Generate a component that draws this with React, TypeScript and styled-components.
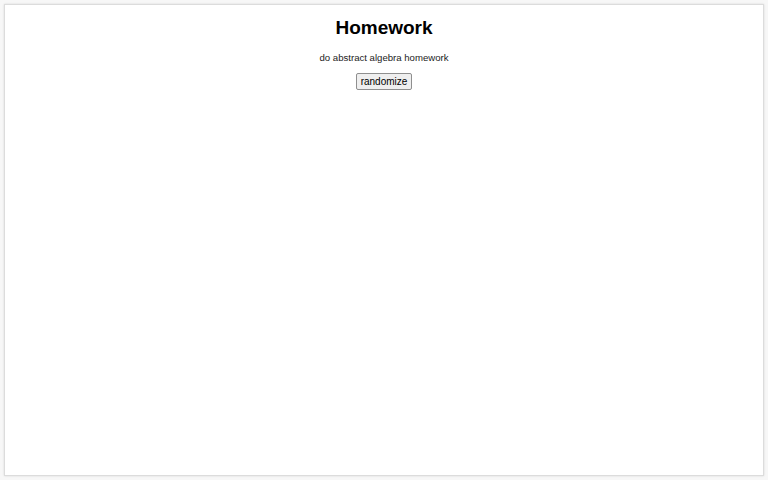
import styled, { createGlobalStyle } from 'styled-components';

const GlobalStyle = createGlobalStyle`
	html, body {
		margin: 0;
		padding: 0;
		background: #f7f7f7;
	}
	body {
		font-family: 'Liberation Sans', Arial, sans-serif;
	}
`;

const Page = styled.div`
	box-sizing: border-box;
	width: 768px;
	height: 480px;
	padding: 4px;
`;

const Card = styled.main`
	box-sizing: border-box;
	height: 472px;
	background: #ffffff;
	border: 1px solid #dcdcdc;
	box-shadow: 0 0 2px rgba(0, 0, 0, 0.12);
	display: flex;
	flex-direction: column;
	align-items: center;
	padding-top: 12px;
`;

const Title = styled.h1`
	margin: 0;
	font-size: 19px;
	font-weight: bold;
	color: #000;
	line-height: 22px;
`;

const Task = styled.p`
	margin: 13px 0 0;
	font-size: 9.6px;
	line-height: 12px;
	color: #222;
`;

const Button = styled.button`
	margin-top: 9px;
	font-family: 'Liberation Sans', Arial, sans-serif;
	font-size: 10px;
	line-height: 11px;
	padding: 2px 4px;
	color: #000;
	background: #efefef;
	border: 1px solid #8f8f8f;
	border-radius: 2px;
`;

export default function App() {
	return (
		<>
			<GlobalStyle />
			<Page>
				<Card>
					<Title>Homework</Title>
					<Task>do abstract algebra homework</Task>
					<Button>randomize</Button>
				</Card>
			</Page>
		</>
	);
}
